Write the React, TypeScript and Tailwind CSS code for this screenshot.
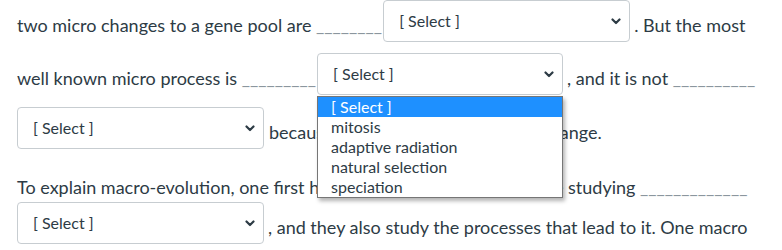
import React from "react"

const blank = (n: number) => "_".repeat(n)

function Chevron() {
  return (
    <svg width="10" height="7" viewBox="0 0 10 7" className="shrink-0">
      <path d="M1.5 1.5 L5 5 L8.5 1.5" fill="none" stroke="#2d3b45" strokeWidth="2.2" strokeLinecap="round" strokeLinejoin="round" />
    </svg>
  )
}

function FakeSelect({ width }: { width: number }) {
  return (
    <div
      className="h-[42px] shrink-0 flex items-center justify-between pl-[15px] pr-[8px] bg-white border border-[#c7cdd1] rounded-[4px] text-[16px] text-[#2d3b45]"
      style={{ width }}
    >
      <span>[ Select ]</span>
      <Chevron />
    </div>
  )
}

const options = ["[ Select ]", "mitosis", "adaptive radiation", "natural selection", "speciation"]

export default function App() {
  return (
    <div className="relative w-[782px] h-[250px] overflow-hidden bg-white pl-[17px] text-[18px] leading-[24px] text-[#2d3b45] whitespace-nowrap font-['Lato','Liberation_Sans',sans-serif]">
      {/* row 1 */}
      <div className="flex items-start h-[42px]">
        <span className="mt-[13px]">two micro changes to a gene pool are <span className="text-[#8b969e]">{blank(8)}</span></span>
        <div className="ml-[1px]"><FakeSelect width={247} /></div>
        <span className="mt-[13px] ml-[4px]">. But the most</span>
      </div>

      {/* row 2 */}
      <div className="flex items-start h-[42px] mt-[11px]">
        <span className="mt-[13px]">well known micro process is <span className="text-[#8b969e]">{blank(9)}</span></span>
        <div className="relative ml-[1px]">
          <FakeSelect width={246} />
          {/* open list */}
          <div className="absolute left-0 top-[43px] w-[246px] bg-white border border-[#767676] shadow-[2px_3px_4px_rgba(0,0,0,0.3)] z-10 text-[16px] leading-[20px]">
            {options.map((o, i) => (
              <div
                key={o}
                className={`h-[20px] pl-[13px] ${i === 0 ? "bg-[#1e90ff] text-white" : "text-[#2d3b45]"}`}
              >
                {o}
              </div>
            ))}
          </div>
        </div>
        <span className="mt-[13px] ml-[4px]">, and it is not <span className="text-[#8b969e]">{blank(10)}</span></span>
      </div>

      {/* row 3 */}
      <div className="flex items-start h-[42px] mt-[12px]">
        <FakeSelect width={247} />
        <span className="mt-[13px] ml-[5px]">because it doesn't cause a genetic change.</span>
      </div>

      {/* row 4 */}
      <div className="h-[24px] mt-[26px]">
        To explain macro-evolution, one first has to understand what they are studying <span className="text-[#8b969e]">{blank(13)}</span>
      </div>

      {/* row 5 */}
      <div className="flex items-start h-[42px] mt-[3px]">
        <FakeSelect width={247} />
        <span className="mt-[13px] ml-[4px]">, and they also study the processes that lead to it. One macro</span>
      </div>
    </div>
  )
}
